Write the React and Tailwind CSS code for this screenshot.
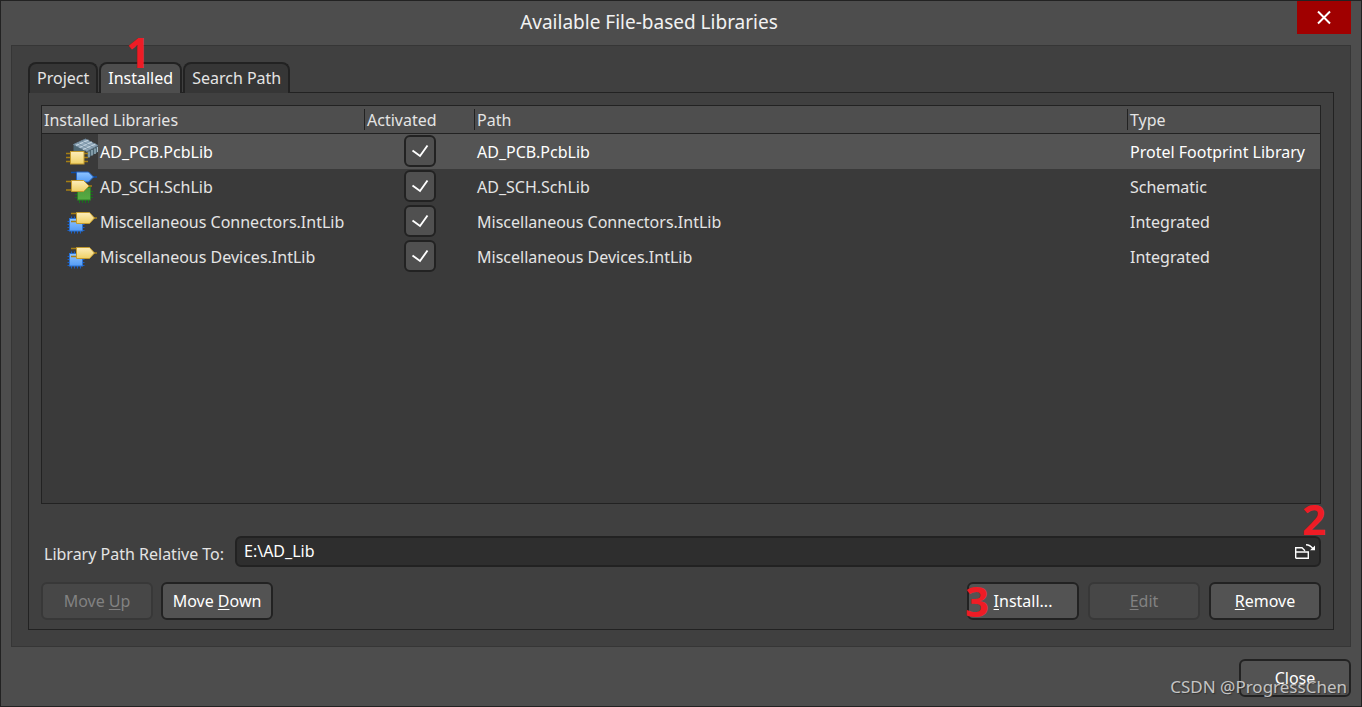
import React, { useState } from "react";

const LIBRARIES = [
  { name: "AD_PCB.PcbLib", type: "Protel Footprint Library", icon: "pcb" },
  { name: "AD_SCH.SchLib", type: "Schematic", icon: "sch" },
  { name: "Miscellaneous Connectors.IntLib", type: "Integrated", icon: "int" },
  { name: "Miscellaneous Devices.IntLib", type: "Integrated", icon: "int" },
];

function Defs() {
  return (
    <svg className="absolute h-0 w-0" aria-hidden="true">
      <defs>
        <linearGradient id="gold" x1="0" y1="0" x2="0" y2="1">
          <stop offset="0" stopColor="#fdeebb" />
          <stop offset="1" stopColor="#efd065" />
        </linearGradient>
        <linearGradient id="blue" x1="0" y1="0" x2="0" y2="1">
          <stop offset="0" stopColor="#8fc4ff" />
          <stop offset="1" stopColor="#549cf5" />
        </linearGradient>
        <linearGradient id="green" x1="0" y1="0" x2="0" y2="1">
          <stop offset="0" stopColor="#4f9a3d" />
          <stop offset="1" stopColor="#57ad43" />
        </linearGradient>
      </defs>
    </svg>
  );
}

function PcbIcon() {
  return (
    <svg className="block h-[35px] w-8" viewBox="0 -1 32 35" aria-hidden="true">
      <path d="M7.500 9v7h13V16z" fill="#4d6673" />
      <path d="M7.500 9.500L19.500 4L32 10.500L21 16.500z" fill="#8ea6b8" stroke="#6d8496" />
      <path d="M10 10.500l12.500-5.500M13.500 12.500l12.500-5.500M17 14.500l12.500-5.500" stroke="#c3d3de" strokeWidth="1.200" />
      <path d="M11.500 8l12 6.500M15.500 6l12 6.500" stroke="#71899b" strokeWidth="0.800" />
      <path d="M21 17L32 11V17L21.500 23z" fill="#4d6673" />
      <path d="M23 16.500v6M26 15v5.500M29 13.500v5.500M31.500 12v5" stroke="#a5bdc8" strokeWidth="1.200" />
      <path d="M0 18.500h5M0 22.500h5M0 26.500h5M18 18.500h4M18 22.500h4M18 26.500h4" stroke="#a67f14" strokeWidth="1.400" />
      <rect x="4.500" y="16.500" width="13.500" height="12.500" fill="url(#gold)" stroke="#c29a2e" />
    </svg>
  );
}

function SchIcon() {
  return (
    <svg className="block h-[35px] w-8" viewBox="0 -1 32 35" aria-hidden="true">
      <path d="M9 21.500h18M9 24.500h18M9 27.500h18M13.500 30v3M16.500 30v3M19.500 30v3M22.500 30v3" stroke="#17721c" />
      <rect x="11.500" y="17.500" width="13" height="12.500" fill="url(#green)" stroke="#2d8026" />
      <path d="M5 2.500h6M27 7h4" stroke="#0d4da8" strokeWidth="1.500" />
      <path d="M10.500 2h12l5 5-5 5h-12z" fill="url(#blue)" stroke="#2263c2" />
      <path d="M0 11.500h7M0 20h7M21 16h5" stroke="#a67f14" strokeWidth="1.500" />
      <path d="M5.500 10.500h12l5.500 5.500-5.500 5.500h-12z" fill="url(#gold)" stroke="#c29a2e" />
    </svg>
  );
}

function IntIcon() {
  return (
    <svg className="block h-[35px] w-8" viewBox="0 -1 32 35" aria-hidden="true">
      <path d="M1.500 16.500h17M1.500 19.500h17M1.500 22.500h17M1.500 25.500h17M5.500 11.500v17M8.500 11.500v17M11.500 11.500v17M14.500 11.500v17" stroke="#1c5fc0" />
      <rect x="3.500" y="13.500" width="13" height="12.500" fill="url(#blue)" stroke="#2a72d4" />
      <path d="M5 8.500h6M5 16.500h6M27 13h4" stroke="#a67f14" strokeWidth="1.500" />
      <path d="M10.500 7.500h13l5 5.500-5 5.500h-13z" fill="url(#gold)" stroke="#c29a2e" />
    </svg>
  );
}

const ICONS = { pcb: PcbIcon, sch: SchIcon, int: IntIcon };

function Check({ label }) {
  const [on, setOn] = useState(true);
  return (
    <span className="mx-auto grid h-8 w-8">
      <input
        type="checkbox"
        aria-label={label}
        checked={on}
        onChange={() => setOn(!on)}
        className="col-start-1 row-start-1 h-8 w-8 appearance-none rounded-md border-2 border-[#222222] bg-[#505050]"
      />
      {on && (
        <svg className="pointer-events-none col-start-1 row-start-1 h-8 w-8" viewBox="0 0 32 32" fill="none" aria-hidden="true">
          <path d="M8.500 15.500l7.500 5.500L23.500 10.500" stroke="#ffffff" strokeWidth="1.900" />
        </svg>
      )}
    </span>
  );
}

function Button({ children, disabled }) {
  return (
    <button
      type="button"
      disabled={disabled}
      className={
        "h-[38px] w-28 rounded-md border-2 text-center " +
        (disabled
          ? "border-[#383838] bg-[#474747] text-[#828282]"
          : "border-[#222222] bg-[#535353] text-white")
      }
    >
      {children}
    </button>
  );
}

function Key({ children }) {
  return <span className="underline underline-offset-2">{children}</span>;
}

function Tab({ children, active }) {
  return (
    <button
      type="button"
      role="tab"
      aria-selected={!!active}
      className={
        "h-[31px] rounded-t-lg border-2 border-b-0 border-[#222222] px-[7px] pb-[2px] " +
        (active ? "bg-[#4e4e4e] text-white" : "border-b bg-[#363636] text-[#e4e4e4]")
      }
    >
      {children}
    </button>
  );
}

function Heading({ children, first }) {
  return (
    <th scope="col" className="border-b border-[#222222] p-0 text-left font-normal">
      <div className={"my-[3px] flex h-[21px] items-center pl-[2px] " + (first ? "" : "border-l border-[#222222]")}>
        {children}
      </div>
    </th>
  );
}

export default function App() {
  return (
    <main className="flex min-h-screen flex-col border border-[#222222] bg-[#4d4d4d] font-['Noto_Sans',sans-serif] text-base leading-5 text-[#e4e4e4]">
      <Defs />
      <header className="flex h-11 shrink-0 items-start pr-[10px]">
        <h1 className="flex h-[42px] flex-1 items-center justify-center text-[19px] text-[#f2f2f2]">Available File-based Libraries</h1>
        <button type="button" aria-label="Close window" className="grid h-[33px] w-[54px] place-items-center bg-[#a00000]">
          <svg className="h-4 w-4" viewBox="0 0 16 16" aria-hidden="true">
            <path d="M2 1.500l12 12M14 1.500L2 13.500" stroke="#ffffff" strokeWidth="2" />
          </svg>
        </button>
      </header>

      <section className="mx-[10px] flex flex-1 flex-col border border-[#363636] bg-[#404040] p-4">
        <div role="tablist" className="relative -mb-px flex gap-px">
          <Tab>Project</Tab>
          <Tab active>Installed</Tab>
          <Tab>Search Path</Tab>
          <span className="absolute -top-[26px] left-[98px] text-[42px] leading-[31px] font-bold text-[#ee1c25]">1</span>
        </div>

        <div className="flex flex-1 flex-col border border-[#222222] px-3 pt-3 pb-[9px]">
          <div className="flex-1 border border-[#222222] bg-[#3a3a3a]">
            <table className="w-full table-fixed border-separate border-spacing-0">
              <colgroup>
                <col className="w-[322px]" />
                <col className="w-[110px]" />
                <col />
                <col className="w-[193px]" />
              </colgroup>
              <thead className="bg-[#4e4e4e]">
                <tr>
                  <Heading first>Installed Libraries</Heading>
                  <Heading>Activated</Heading>
                  <Heading>Path</Heading>
                  <Heading>Type</Heading>
                </tr>
              </thead>
              <tbody>
                {LIBRARIES.map((lib, i) => {
                  const Icon = ICONS[lib.icon];
                  const bg = i === 0 ? "bg-[#545454] text-white" : "";
                  return (
                    <tr key={lib.name} className="h-[35px]">
                      <td className="p-0">
                        <div className="flex h-[35px] items-center pl-6">
                          <Icon />
                          <span className={"flex h-full flex-1 items-center pl-[2px] whitespace-nowrap " + bg}>{lib.name}</span>
                        </div>
                      </td>
                      <td className={"p-0 pb-px pl-[2px] " + bg}>
                        <Check label={"Activate " + lib.name} />
                      </td>
                      <td className={"p-0 pl-[3px] " + bg}>{lib.name}</td>
                      <td className={"p-0 pl-[3px] whitespace-nowrap " + bg}>{lib.type}</td>
                    </tr>
                  );
                })}
              </tbody>
            </table>
          </div>

          <div className="relative mt-8 flex items-center">
            <label htmlFor="library-path" className="w-[194px] shrink-0 pt-1 pl-[3px] whitespace-nowrap">
              Library Path Relative To:
            </label>
            <div className="flex h-[31px] flex-1 items-center rounded-md border-2 border-[#222222] bg-[#2e2e2e] pr-1 pl-[7px]">
              <input id="library-path" defaultValue="E:\AD_Lib" className="h-full min-w-0 flex-1 bg-transparent pb-[2px] text-white outline-none" />
              <button type="button" aria-label="Browse" className="h-5 w-5">
                <svg className="h-5 w-5" viewBox="0 0 20 20" fill="none" aria-hidden="true">
                  <path d="M0.700 16.300V5.700h6.300l3 3M0.700 10h12.600v6.300H0.700" stroke="#ffffff" strokeWidth="1.400" />
                  <path d="M11 2.700c3 0 5 1.300 7 4" stroke="#ffffff" strokeWidth="1.500" />
                  <path d="M20 3.500V8.300H15z" fill="#ffffff" />
                </svg>
              </button>
            </div>
            <span className="absolute -top-[33px] -right-[5px] text-[42px] leading-[31px] font-bold text-[#ee1c25]">2</span>
          </div>

          <div className="mt-[15px] flex gap-2">
            <Button disabled>Move <Key>U</Key>p</Button>
            <Button>Move <Key>D</Key>own</Button>
            <div className="relative ml-auto flex gap-[9px]">
              <Button><Key>I</Key>nstall...</Button>
              <Button disabled><Key>E</Key>dit</Button>
              <Button><Key>R</Key>emove</Button>
              <span className="absolute top-[3px] -left-[2px] text-[42px] leading-[31px] font-bold text-[#ee1c25]">3</span>
            </div>
          </div>
        </div>
      </section>

      <footer className="relative flex h-[59px] shrink-0 justify-end px-[10px] pt-3">
        <Button>Close</Button>
        <span className="absolute right-[14px] bottom-[9px] text-[17px] text-[#c4c4c4] [text-shadow:1px_1px_1px_#333333]">CSDN @ProgressChen</span>
      </footer>
    </main>
  );
}
